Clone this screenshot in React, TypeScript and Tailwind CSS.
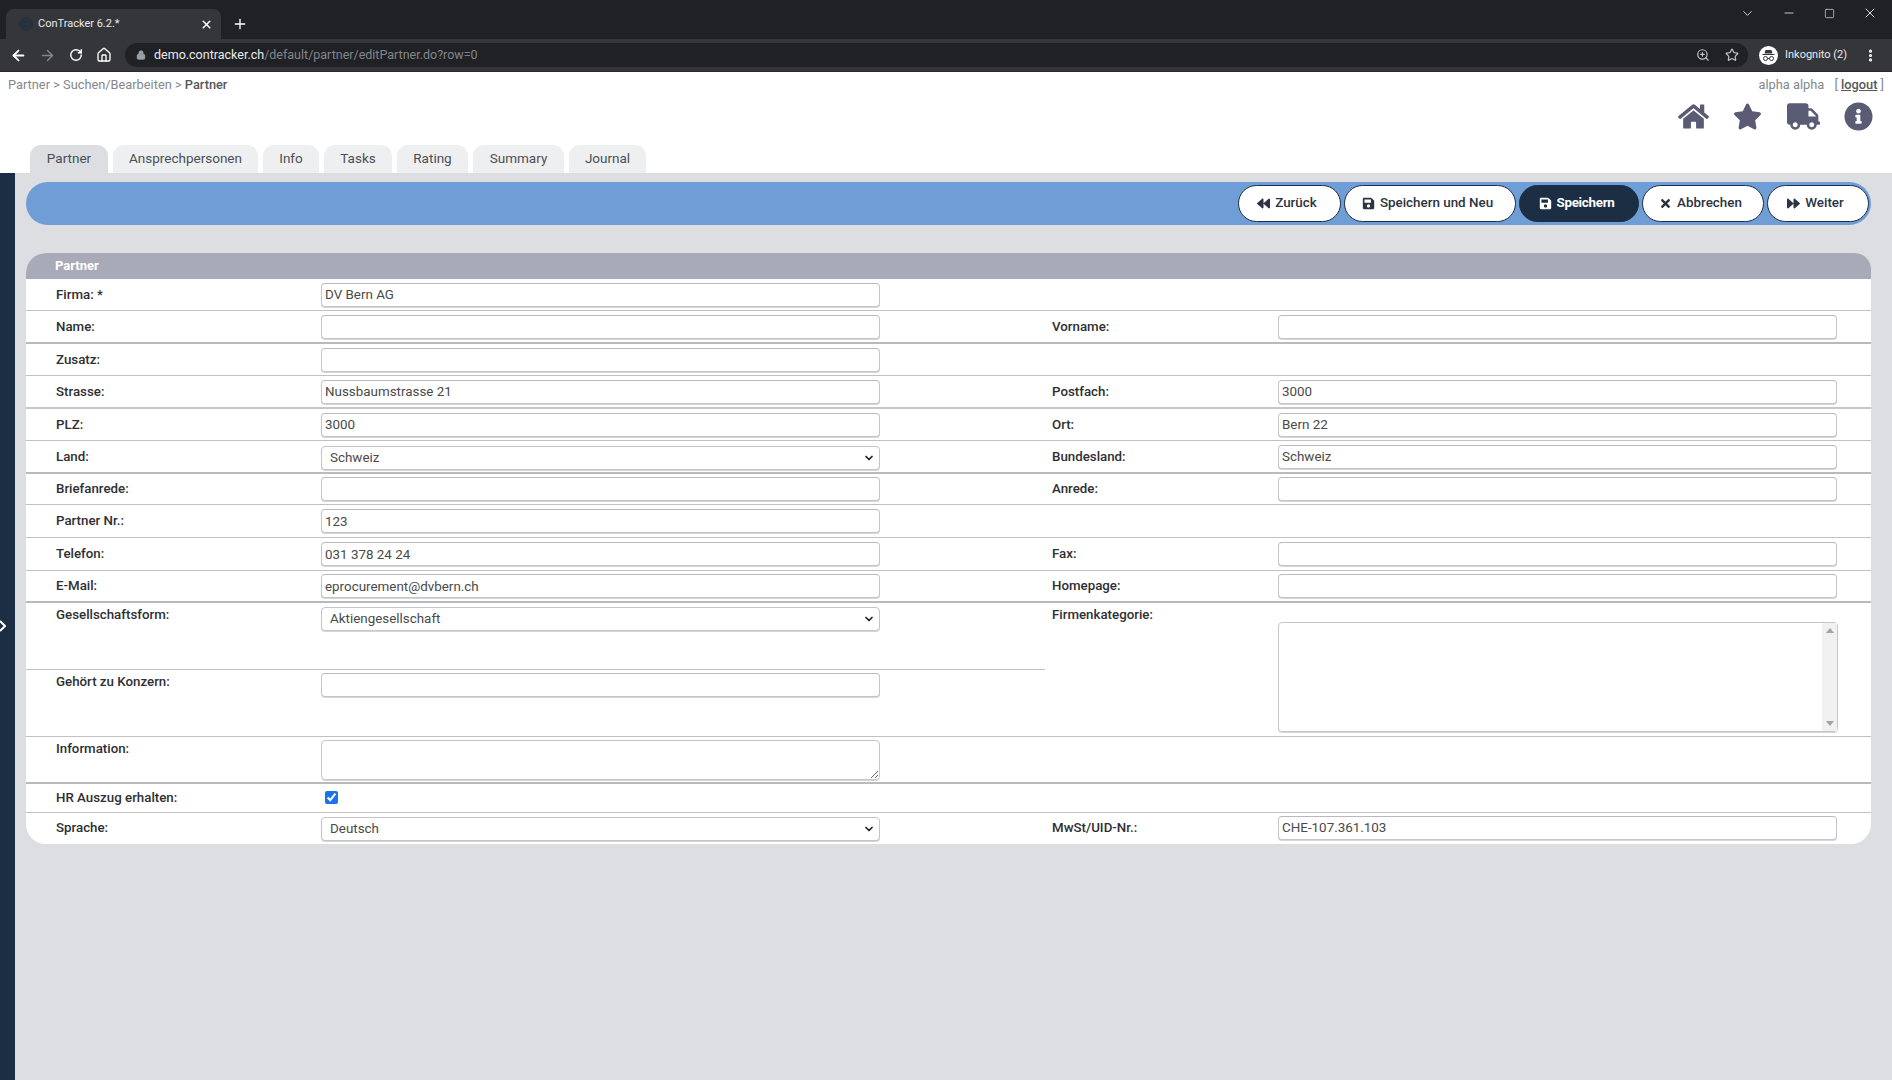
import { FaBackward, FaForward, FaHome, FaInfoCircle, FaSave, FaStar, FaTimes, FaTruck } from "react-icons/fa";
import { ArrowLeft, ArrowRight, ChevronDown, Home, Lock, Minus, MoreVertical, Plus, RotateCw, Square, Star, X, ZoomIn } from "lucide-react";
import { ReactNode } from "react";

const inputCls =
  "h-[24px] w-[559px] rounded-[4px] border border-[#c4c5c9] border-t-[#b9babd] bg-white px-[3px] text-[13.4px] text-[#4a4a4a] shadow-[0_1px_0_#d5d6d9] outline-none";
const selectCls =
  "h-[24px] w-full appearance-none rounded-[4px] border border-[#c4c5c9] bg-white pl-[8px] text-[13.4px] text-[#4a4a4a] shadow-[0_1px_0_#d5d6d9] outline-none";

function Field({ value = "" }: { value?: string }) {
  return <input readOnly value={value} className={inputCls} />;
}

function Choice({ value }: { value: string }) {
  return (
    <div className="relative h-[24px] w-[559px]">
      <select className={selectCls} defaultValue={value}>
        <option>{value}</option>
      </select>
      <ChevronDown size={12} strokeWidth={3.5} className="absolute right-[5px] top-[7px] text-[#222]" />
    </div>
  );
}

function Row({ h, border, label, left, rlabel, right }: { h: string; border: string; label: string; left: ReactNode; rlabel?: string; right?: ReactNode }) {
  return (
    <div className={`flex items-center ${h} ${border}`}>
      <div className="w-[295px] pl-[30px] text-[13.3px] font-medium text-[#2f2f33]">{label}</div>
      <div className="flex w-[559px] items-center">{left}</div>
      <div className="ml-[172px] w-[226px] text-[13.3px] font-medium text-[#2f2f33]">{rlabel}</div>
      {right}
    </div>
  );
}

function ActionBtn({ w, icon, text, dark }: { w: string; icon: ReactNode; text: string; dark?: boolean }) {
  return (
    <button
      className={`flex h-[37px] items-center justify-center gap-[5px] rounded-full border border-[#1c2e44] pr-[5px] text-[13.4px] ${w} ${
        dark ? "bg-[#1c2e44] font-bold tracking-[-0.3px] text-white" : "bg-white font-medium text-[#2b3440]"
      }`}
    >
      {icon}
      {text}
    </button>
  );
}

function Tab({ w, text, active }: { w: string; text: string; active?: boolean }) {
  return (
    <div className={`flex h-[28px] items-center justify-center rounded-t-[11px] pb-[2px] text-[13.5px] text-[#4c4f55] ${w} ${active ? "bg-[#dcdee2]" : "bg-[#eeeff1]"}`}>
      {text}
    </div>
  );
}

export default function App() {
  return (
    <div className="flex h-[1080px] w-[1892px] flex-col overflow-hidden bg-white font-['Roboto',sans-serif]">
      {/* browser tab strip */}
      <div className="flex h-[39px] items-end bg-[#202124] pl-[6px] text-white">
        <div className="flex h-[30px] w-[215px] items-center rounded-t-[8px] bg-[#35363a] pl-[13px] pr-[8px]">
          <div className="h-[14px] w-[14px] rounded-full bg-[#27303d]" />
          <span className="ml-[5px] flex-1 text-[11px] text-[#e8eaed]">ConTracker 6.2.*</span>
          <X size={13} strokeWidth={3} />
        </div>
        <Plus size={16} strokeWidth={2} className="mb-[7px] ml-[11px]" />
        <div className="mb-[18px] ml-auto flex items-center pr-[14px] text-[#dadce0]">
          <ChevronDown size={15} strokeWidth={1.5} />
          <Minus size={14} strokeWidth={1.5} className="ml-[27px]" />
          <Square size={11} strokeWidth={1.5} className="ml-[28px]" />
          <X size={16} strokeWidth={1.5} className="ml-[27px]" />
        </div>
      </div>
      {/* browser toolbar */}
      <div className="flex h-[33px] items-center border-b border-[#28292c] bg-[#35363a] text-white">
        <ArrowLeft size={17} strokeWidth={2.5} className="ml-[10px]" />
        <ArrowRight size={17} strokeWidth={2} className="ml-[12px] text-[#85878a]" />
        <RotateCw size={14} strokeWidth={2.5} className="ml-[13px]" />
        <Home size={16} strokeWidth={2} className="ml-[13px]" />
        <div className="ml-[13px] flex h-[24px] w-[1623px] items-center rounded-full bg-[#202124] pl-[11px] pr-[9px]">
          <Lock size={10} fill="#9aa0a6" className="text-[#9aa0a6]" />
          <span className="ml-[8px] text-[12.5px] text-[#e8eaed]">demo.contracker.ch</span>
          <span className="text-[12.5px] text-[#80868b]">/default/partner/editPartner.do?row=0</span>
          <ZoomIn size={14} className="ml-auto text-[#c4c7ca]" />
          <Star size={14} className="ml-[15px] text-[#c4c7ca]" />
        </div>
        {/* incognito badge */}
        <svg className="ml-[11px] shrink-0" width="19" height="19" viewBox="0 0 19 19">
          <circle cx="9.5" cy="9.5" r="9.5" fill="#fff" />
          <path d="M6.5 4h6l1 3.5h-8zM3.5 8h12v1h-12z" fill="#35363a" />
          <circle cx="6.5" cy="12.5" r="2" fill="none" stroke="#35363a" strokeWidth="1" />
          <circle cx="12.5" cy="12.5" r="2" fill="none" stroke="#35363a" strokeWidth="1" />
          <path d="M8.5 12.5h2" stroke="#35363a" strokeWidth="1" />
        </svg>
        <span className="ml-[7px] text-[11px] text-[#e8eaed]">Inkognito (2)</span>
        <MoreVertical size={15} strokeWidth={3} className="ml-[16px]" />
      </div>
      {/* page header */}
      <div className="relative h-[101px] shrink-0 bg-white">
        <div className="flex justify-between px-[8px] pt-[3px] text-[12.8px] text-[#85878c]">
          <div>
            Partner &gt; Suchen/Bearbeiten &gt; <span className="font-medium text-[#55575c]">Partner</span>
          </div>
          <div>
            alpha alpha <span className="ml-[7px]">[</span> <span className="font-medium text-[#55575c] underline">logout</span> ]
          </div>
        </div>
        <div className="absolute right-[19px] top-[28px] flex items-center gap-[25px] text-[#5a5b74]">
          <FaHome size={31} className="mr-[-1px]" />
          <FaStar size={29} />
          <FaTruck size={33} className="mr-[-1px]" />
          <FaInfoCircle size={29} />
        </div>
        <div className="absolute bottom-0 left-[30px] flex gap-[5px]">
          <Tab w="w-[78px]" text="Partner" active />
          <Tab w="w-[145px]" text="Ansprechpersonen" />
          <Tab w="w-[56px]" text="Info" />
          <Tab w="w-[68px]" text="Tasks" />
          <Tab w="w-[71px]" text="Rating" />
          <Tab w="w-[91px]" text="Summary" />
          <Tab w="w-[77px]" text="Journal" />
        </div>
      </div>
      {/* page body */}
      <div className="flex flex-1 bg-[#dcdee2]">
        <div className="relative w-[15px] bg-[#1c2e44]">
          <svg className="absolute left-[-1px] top-[447px]" width="7" height="12" viewBox="0 0 7 12">
            <path d="M1 1l5 5-5 5" fill="none" stroke="#fff" strokeWidth="2" />
          </svg>
        </div>
        <div className="w-[1856px] pl-[11px] pt-[9px]">
          <div className="flex h-[43px] w-[1845px] items-center justify-end gap-[3px] rounded-full bg-[#6f9dd6] pr-[2px]">
            <ActionBtn w="w-[103px]" icon={<FaBackward size={13} />} text="Zurück" />
            <ActionBtn w="w-[172px]" icon={<FaSave size={13} />} text="Speichern und Neu" />
            <ActionBtn w="w-[120px]" icon={<FaSave size={13} />} text="Speichern" dark />
            <ActionBtn w="w-[122px]" icon={<FaTimes size={13} />} text="Abbrechen" />
            <ActionBtn w="w-[102px]" icon={<FaForward size={13} />} text="Weiter" />
          </div>
          <div className="mt-[28px] w-[1845px] overflow-hidden rounded-[20px] rounded-tr-[16px] bg-white">
            <div className="flex h-[26px] items-center bg-[#a9aab8] pl-[29px] text-[13px] font-bold text-white">Partner</div>
            <Row h="h-[32px]" border="border-b border-[#c0c1c4]" label="Firma: *" left={<Field value="DV Bern AG" />} />
            <Row h="h-[33px]" border="border-b-2 border-[#b9babd]" label="Name:" left={<Field />} rlabel="Vorname:" right={<Field />} />
            <Row h="h-[32px]" border="border-b border-[#c0c1c4]" label="Zusatz:" left={<Field />} />
            <Row h="h-[33px]" border="border-b-2 border-[#c6c7ca]" label="Strasse:" left={<Field value="Nussbaumstrasse 21" />} rlabel="Postfach:" right={<Field value="3000" />} />
            <Row h="h-[32px]" border="border-b border-[#c0c1c4]" label="PLZ:" left={<Field value="3000" />} rlabel="Ort:" right={<Field value="Bern 22" />} />
            <Row h="h-[33px]" border="border-b-2 border-[#b9babd]" label="Land:" left={<Choice value="Schweiz" />} rlabel="Bundesland:" right={<Field value="Schweiz" />} />
            <Row h="h-[31px]" border="border-b border-[#c0c1c4]" label="Briefanrede:" left={<Field />} rlabel="Anrede:" right={<Field />} />
            <Row h="h-[33px]" border="border-b border-[#c0c1c4]" label="Partner Nr.:" left={<Field value="123" />} />
            <Row h="h-[33px]" border="border-b border-[#c0c1c4]" label="Telefon:" left={<Field value="031 378 24 24" />} rlabel="Fax:" right={<Field />} />
            <Row h="h-[32px]" border="border-b-2 border-[#b9babd]" label="E-Mail:" left={<Field value="eprocurement@dvbern.ch" />} rlabel="Homepage:" right={<Field />} />
            <div className="flex h-[134px] border-b border-[#c0c1c4]">
              <div className="w-[1019px]">
                <div className="flex h-[67px] items-start border-b border-[#c0c1c4] pt-[3px]">
                  <div className="w-[295px] pl-[30px] text-[13.3px] font-medium leading-[18px] text-[#2f2f33]">Gesellschaftsform:</div>
                  <Choice value="Aktiengesellschaft" />
                </div>
                <div className="flex h-[67px] items-start pt-[3px]">
                  <div className="w-[295px] pl-[30px] text-[13.3px] font-medium leading-[18px] text-[#2f2f33]">Gehört zu Konzern:</div>
                  <Field />
                </div>
              </div>
              <div className="ml-[7px] w-[226px] pt-[3px] text-[13.3px] font-medium leading-[18px] text-[#2f2f33]">Firmenkategorie:</div>
              <div className="mt-[19px] flex h-[110px] w-[560px] justify-end rounded-[4px] border border-[#c4c5c9] shadow-[0_1px_0_#d5d6d9]">
                <div className="flex w-[15px] flex-col items-center justify-between bg-[#f1f1f1] py-[5px]">
                  <div className="h-0 w-0 border-x-[4px] border-b-[5px] border-x-transparent border-b-[#a3a3a3]" />
                  <div className="h-0 w-0 border-x-[4px] border-t-[5px] border-x-transparent border-t-[#a3a3a3]" />
                </div>
              </div>
            </div>
            <div className="flex h-[47px] items-start border-b-2 border-[#b9babd] pt-[3px]">
              <div className="w-[295px] pl-[30px] text-[13.3px] font-medium leading-[18px] text-[#2f2f33]">Information:</div>
              <textarea readOnly className="h-[40px] w-[559px] rounded-[4px] border border-[#c4c5c9] shadow-[0_1px_0_#d5d6d9] outline-none" />
            </div>
            <Row h="h-[29px]" border="border-b border-[#c0c1c4]" label="HR Auszug erhalten:" left={<input type="checkbox" readOnly checked className="mb-[1px] ml-[4px] h-[13px] w-[13px] accent-[#1a73e8]" />} />
            <Row h="h-[31px]" border="pb-[2px]" label="Sprache:" left={<Choice value="Deutsch" />} rlabel="MwSt/UID-Nr.:" right={<Field value="CHE-107.361.103" />} />
          </div>
        </div>
      </div>
    </div>
  );
}
